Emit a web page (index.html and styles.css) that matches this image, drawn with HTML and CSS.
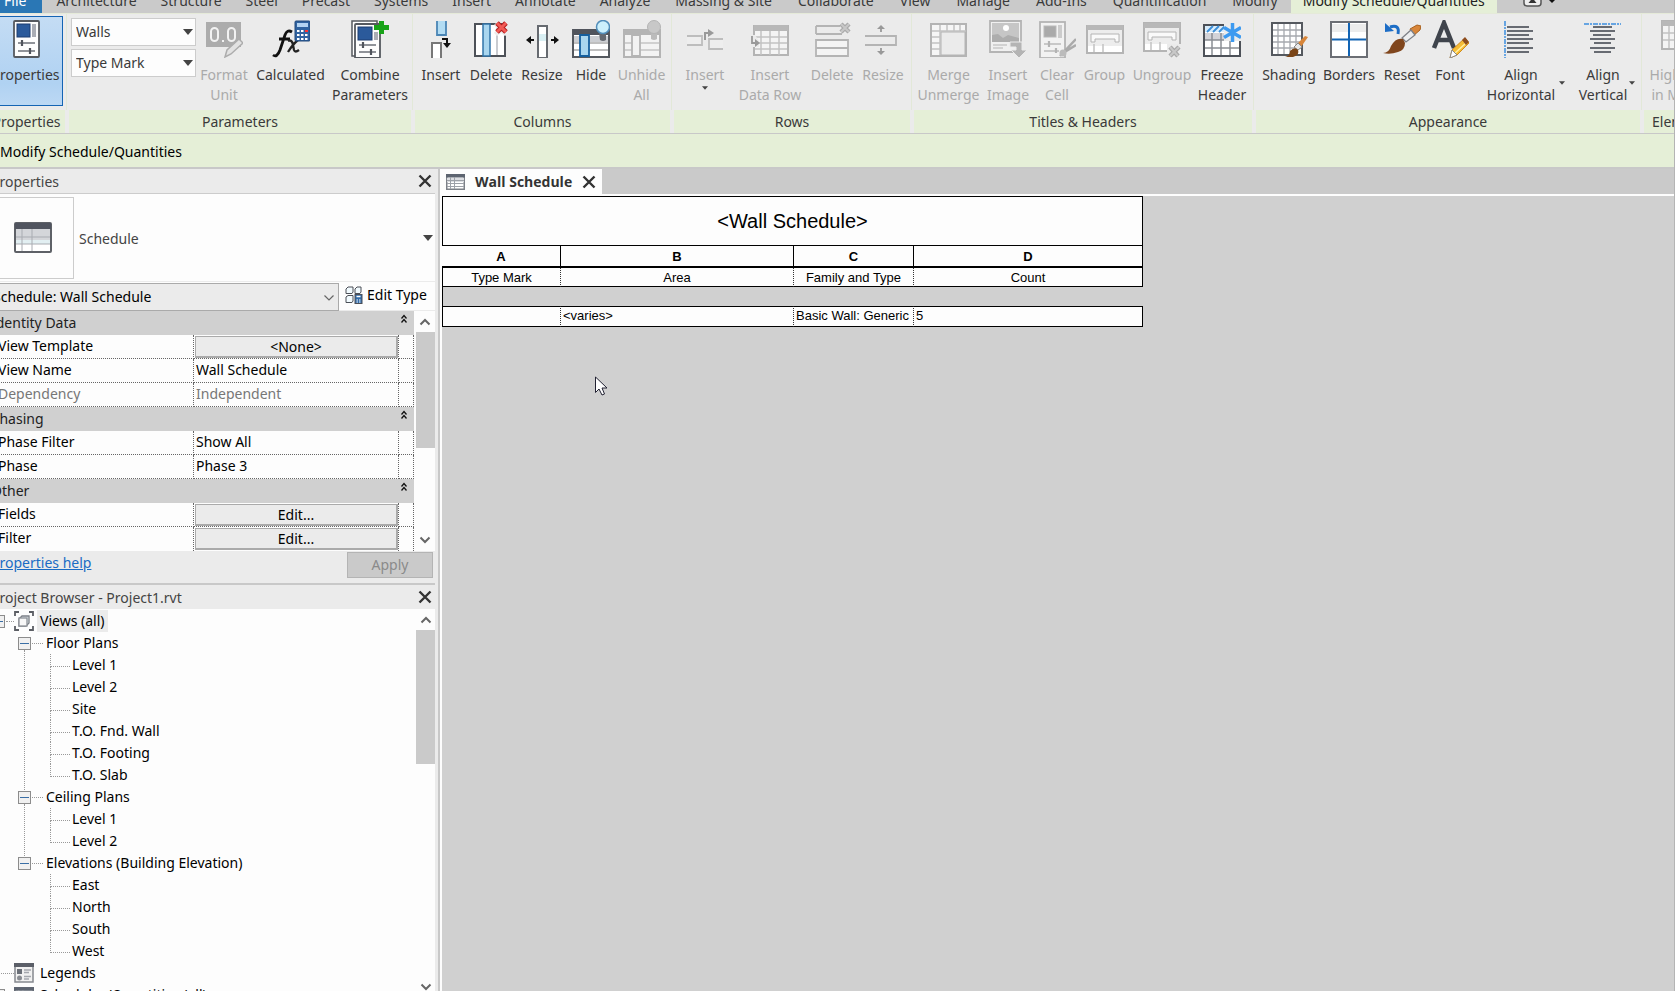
FILE: index.html
```
<!DOCTYPE html>
<html lang="en">
<head>
<meta charset="utf-8">
<title>Wall Schedule</title>
<link rel="stylesheet" href="styles.css">
</head>
<body>
<svg class="defs" aria-hidden="true">
  <symbol id="caret" viewBox="0 0 10 6"><path d="M0 0h10L5 6z" fill="#444"/></symbol>
  <symbol id="close" viewBox="0 0 14 14"><path d="M1.500 1.500l11 11M12.500 1.500l-11 11" stroke="#333" stroke-width="2.400" fill="none"/></symbol>
  <symbol id="up" viewBox="0 0 12 8"><path d="M1.500 6.500L6 2l4.500 4.500" stroke="#666" stroke-width="2" fill="none"/></symbol>
  <symbol id="down" viewBox="0 0 12 8"><path d="M1.500 1.500L6 6l4.500-4.500" stroke="#666" stroke-width="2" fill="none"/></symbol>
  <symbol id="fold" viewBox="0 0 8 10"><path d="M1.500 4.500L4 1.500l2.500 3M1.500 8.500L4 5.500l2.500 3" stroke="#111" stroke-width="1.300" fill="none"/></symbol>
  <symbol id="sheet" viewBox="0 0 38 32"><rect x="1" y="1" width="36" height="29" rx="1" fill="#fff" stroke="#5e6167" stroke-width="2"/><rect x="2" y="7" width="34" height="11" fill="#d4d6da"/><path d="M2 18h34v4H2z" fill="#e2eff2"/><path d="M1 1h36v6H1z" fill="#50545f"/><path d="M8 7v22M18 7v22M2 15h34M2 22h34" stroke="#a9acb2" fill="none"/></symbol>
  <symbol id="sheet-s" viewBox="0 0 19 16"><rect x=".75" y=".75" width="17.500" height="14.500" fill="#fff" stroke="#7c8087" stroke-width="1.500"/><path d="M1 4h17v4H1z" fill="#dcdee2"/><path d="M0 0h19v3.500H0z" fill="#5d6470"/><path d="M4.500 3v12M8.500 3v12M1 6.500h17M1 9.500h17M1 12.500h17" stroke="#9da1a8" fill="none"/></symbol>
</svg>

<nav class="tabs">
  <a class="tab file" href="#">File</a>
  <a class="tab" href="#">Architecture</a>
  <a class="tab" href="#">Structure</a>
  <a class="tab" href="#">Steel</a>
  <a class="tab" href="#">Precast</a>
  <a class="tab" href="#">Systems</a>
  <a class="tab" href="#">Insert</a>
  <a class="tab" href="#">Annotate</a>
  <a class="tab" href="#">Analyze</a>
  <a class="tab" href="#">Massing &amp; Site</a>
  <a class="tab" href="#">Collaborate</a>
  <a class="tab" href="#">View</a>
  <a class="tab" href="#">Manage</a>
  <a class="tab" href="#">Add-Ins</a>
  <a class="tab" href="#">Quantification</a>
  <a class="tab" href="#">Modify</a>
  <a class="tab active" href="#">Modify Schedule/Quantities</a>
  <button class="minimize" aria-label="Minimize ribbon"><svg width="32" height="14" viewBox="0 0 32 14"><rect x="1" y="-10" width="17" height="17" rx="3" fill="#eee" stroke="#555" stroke-width="1.500"/><path d="M5.500 4L9.500 -1l4 5z" fill="#333"/><path d="M25 0h8l-4 4z" fill="#111"/></svg></button>
</nav>

<header class="ribbon">
  <section class="panel p-props">
    <div class="tools">
      <button class="tool pressed"><svg class="ico" viewBox="0 0 38 38"><rect x="7" y="1" width="25" height="36" rx="1" fill="#fdfdfd" stroke="#55595f" stroke-width="1.800"/><rect x="10" y="4" width="13" height="13" fill="#2b5a9b" stroke="#1d3d70"/><path d="M25 4h4v13h-4z" fill="#aaadb5"/><path d="M11 23h17M11 31h17" stroke="#6c7078" stroke-width="1.600"/><path d="M15 20v6M23 28v6" stroke="#50545c" stroke-width="2.200"/></svg><span>Properties</span></button>
    </div>
    <h2>Properties</h2>
  </section>

  <section class="panel p-params">
    <div class="tools">
      <div class="pickers">
        <div class="pick"><select aria-label="Category"><option>Walls</option></select><svg class="caret" aria-hidden="true"><use href="#caret"/></svg></div>
        <div class="pick"><select aria-label="Parameter"><option>Type Mark</option></select><svg class="caret" aria-hidden="true"><use href="#caret"/></svg></div>
      </div>
      <button class="tool" disabled><svg class="ico" viewBox="0 0 38 38"><path d="M1 2h35v25H1z" fill="#acacac"/><g fill="none" stroke="#f2f2f2" stroke-width="2"><rect x="6" y="8" width="7" height="13" rx="3.500"/><rect x="23" y="8" width="7" height="13" rx="3.500"/><path d="M17 21h2"/></g><path d="M20 37l2-7 12-11 4 4-12 11z" fill="#e2e2e2" stroke="#acacac" stroke-width="1.500"/></svg><span>Format<br>Unit</span></button>
      <button class="tool"><svg class="ico" viewBox="0 0 38 38"><path d="M1 35q4 3 7-5l5-15q2-6 7-3M7 19h11" stroke="#111" stroke-width="2.800" fill="none"/><path d="M16 21q4-2 5 4l1 5q1 3 5 0M26 20q-5 4-10 12" stroke="#222" stroke-width="2.300" fill="none"/><rect x="23" y="1" width="15" height="20" rx="1" fill="#2f62a0" stroke="#23497a"/><path d="M25 3h11v4H25z" fill="#b3d3f2"/><path d="M25 10h2.500v2H25zM29 10h2.500v2H29zM25 14h2.500v2H25zM29 14h2.500v2H29zM33 14h2.500v2H33zM25 18h2.500v2H25zM29 18h2.500v2H29zM33 18h2.500v2H33z" fill="#fff"/><path d="M33 10h3v2h-3z" fill="#f33"/></svg><span>Calculated</span></button>
      <button class="tool"><svg class="ico" viewBox="0 0 38 38"><path d="M4 36H1V1h25v3" fill="#fff" stroke="#55595f" stroke-width="1.500"/><rect x="4" y="4" width="25" height="34" rx="1" fill="#fdfdfd" stroke="#55595f" stroke-width="1.800"/><rect x="7" y="7" width="14" height="13" fill="#2b5a9b" stroke="#1d3d70"/><path d="M23 12h4v8h-4z" fill="#aaadb5"/><path d="M8 25h17M8 32h17" stroke="#6c7078" stroke-width="1.600"/><path d="M12 22v6M20 29v6" stroke="#50545c" stroke-width="2.200"/><path d="M28 1h5v4h5v5h-5v4h-5v-4h-5V5h5z" fill="#18a318"/></svg><span>Combine<br>Parameters</span></button>
    </div>
    <h2>Parameters</h2>
  </section>

  <section class="panel p-cols">
    <div class="tools">
      <button class="tool"><svg class="ico" viewBox="0 0 38 38"><path d="M15 1v14h9V1" fill="#b2dcf3" stroke="#4a85b5" stroke-width="1.800"/><path d="M10 38V23h9v15" fill="#fff" stroke="#777" stroke-width="2"/><path d="M20 19h5v5" fill="none" stroke="#111" stroke-width="2"/><path d="M21 23h8l-4 5z" fill="#111"/></svg><span>Insert</span></button>
      <button class="tool"><svg class="ico" viewBox="0 0 38 38"><rect x="3" y="4" width="30" height="32" fill="#fff" stroke="#4d5158" stroke-width="2"/><path d="M25 5v30" stroke="#b7bac0" stroke-width="1.500"/><path d="M11 4h7v32h-7z" fill="#a9d6ef" stroke="#3174a9" stroke-width="1.500"/><path d="M25 2l4 3 4-3 4 3-3 4 3 4-4 3-4-3-4 3-3-3 3-4-3-4z" fill="#ececec"/><path d="M25 3l9 9M34 3l-9 9" stroke="#b41b1b" stroke-width="5"/><path d="M25 3l9 9M34 3l-9 9" stroke="#f15a55" stroke-width="3"/></svg><span>Delete</span></button>
      <button class="tool"><svg class="ico" viewBox="0 0 38 38"><rect x="15" y="6" width="9" height="32" fill="#fff" stroke="#666a70" stroke-width="2"/><path d="M16 14h7v7h-7z" fill="#d9eff3"/><path d="M5 20h6M28 20h6" stroke="#111" stroke-width="1.800"/><path d="M8 16v8l-5-4zM31 16v8l5-4z" fill="#111"/></svg><span>Resize</span></button>
      <button class="tool"><svg class="ico" viewBox="0 0 38 38"><rect x="1" y="10" width="36" height="27" fill="#fff" stroke="#55595f" stroke-width="2"/><path d="M1 9h36v6H1z" fill="#50545c"/><path d="M2 16h34v6H2z" fill="#ccced2"/><path d="M2 23h34M2 30h34" stroke="#aaa" stroke-width="1.500"/><path d="M8 15h9v21H8z" fill="#a9d6ef" stroke="#155f9e" stroke-width="1.800"/><path d="M27 13h7v7q-3 2-6 0z" fill="#656970"/><circle cx="31" cy="7" r="6.500" fill="#ccf0fc" stroke="#528eba" stroke-width="1.500"/></svg><span>Hide</span></button>
      <button class="tool" disabled><svg class="ico" viewBox="0 0 38 38"><rect x="1" y="10" width="36" height="27" fill="#f3f3f3" stroke="#b4b4b4" stroke-width="2"/><path d="M1 9h36v6H1z" fill="#b4b4b4"/><path d="M2 23h34M2 30h34" stroke="#c5c5c5" stroke-width="1.500"/><path d="M9 15h8v21H9z" fill="#f2f2f2" stroke="#b4b4b4" stroke-width="1.800"/><path d="M28 13h6v6q-3 2-6 0z" fill="#bbb"/><circle cx="31" cy="7" r="6.500" fill="#c8c8c8" stroke="#b4b4b4"/></svg><span>Unhide<br>All</span></button>
    </div>
    <h2>Columns</h2>
  </section>

  <section class="panel p-rows">
    <div class="tools">
      <button class="tool" disabled><svg class="ico" viewBox="0 0 38 38"><path d="M1 16h15v9H1M37 19H23v10h14" fill="#eee" stroke="#bdbdbd" stroke-width="1.800"/><path d="M19 20v-7h4" fill="none" stroke="#999" stroke-width="2"/><path d="M22 9v8l6-4z" fill="#999"/></svg><span>Insert</span><svg class="caret-s" aria-hidden="true"><use href="#caret"/></svg></button>
      <button class="tool" disabled><svg class="ico" viewBox="0 0 38 38"><rect x="3" y="6" width="34" height="29" fill="#f4f4f4" stroke="#b4b4b4" stroke-width="2"/><path d="M3 5h34v6H3z" fill="#b8b8b8"/><path d="M10 11v24M19 11v24M28 11v24M4 17h32M4 23h32M4 29h32" stroke="#c2c2c2" stroke-width="1.500"/><path d="M0 15h4l4 6v6H0z" fill="#ebebeb"/><path d="M1 16v7h5" fill="none" stroke="#999" stroke-width="1.800"/><path d="M4 19v8l5-4z" fill="#999"/></svg><span>Insert<br>Data Row</span></button>
      <button class="tool" disabled><svg class="ico" viewBox="0 0 38 38"><path d="M3 6h24M3 14h26M3 6v8M3 20h32v16H3zM3 28h32" fill="#f4f4f4" stroke="#b4b4b4" stroke-width="1.800"/><path d="M28 4l8 8M36 4l-8 8" stroke="#a9a9a9" stroke-width="4.500"/><path d="M28 4l8 8M36 4l-8 8" stroke="#c8c8c8" stroke-width="2"/></svg><span>Delete</span></button>
      <button class="tool" disabled><svg class="ico" viewBox="0 0 38 38"><path d="M1 16h31v9H1" fill="none" stroke="#b4b4b4" stroke-width="1.800"/><path d="M17 12V8M17 28v5" stroke="#999" stroke-width="1.800"/><path d="M13 9h8l-4-4zM13 31h8l-4 4z" fill="#999"/></svg><span>Resize</span></button>
    </div>
    <h2>Rows</h2>
  </section>

  <section class="panel p-titles">
    <div class="tools">
      <button class="tool" disabled><svg class="ico" viewBox="0 0 38 38"><rect x="1" y="4" width="35" height="32" fill="#f6f6f6" stroke="#b4b4b4" stroke-width="2"/><path d="M10 5v30M2 11h34M17 5v6M24 5v6M30 5v6M2 17h8M2 23h8M2 29h8" stroke="#c2c2c2" stroke-width="1.500"/><path d="M11 12h24v23H11z" fill="#ebebeb" stroke="#b4b4b4"/></svg><span>Merge<br>Unmerge</span></button>
      <button class="tool" disabled><svg class="ico" viewBox="0 0 38 38"><path d="M1 1h31v31H1z" fill="#f0f0f0" stroke="#b4b4b4" stroke-width="1.800"/><path d="M3 3h27v18H3z" fill="#c6c6c6"/><circle cx="17" cy="8" r="3" fill="#fff"/><path d="M3 15l6-1 5 4 5-3 11 3v4H3z" fill="#adadad"/><path d="M4 25h14M4 28h10" stroke="#c8c8c8" stroke-width="1.500"/><path d="M21 22h12v8h5l-8 8-8-8h5v-3h-6z" fill="#b4b4b4" stroke="#ebebeb"/></svg><span>Insert<br>Image</span></button>
      <button class="tool" disabled><svg class="ico" viewBox="0 0 38 38"><rect x="2" y="2" width="25" height="36" fill="#f2f2f2" stroke="#b4b4b4" stroke-width="1.800"/><rect x="6" y="6" width="12" height="11" fill="#aaa" stroke="#b9b9b9"/><path d="M20 5h4v13h-4z" fill="#ccc"/><path d="M6 24h17M6 31h15" stroke="#bbb" stroke-width="1.600"/><path d="M11 21v6M18 28v5" stroke="#b4b4b4" stroke-width="2.200"/><path d="M22 36l16-17M25 33l13-8" stroke="#aaa" stroke-width="2.500"/><circle cx="25" cy="33" r="3.500" fill="#bbb"/></svg><span>Clear<br>Cell</span></button>
      <button class="tool" disabled><svg class="ico" viewBox="0 0 38 38"><rect x="1" y="6" width="36" height="27" fill="#ededed" stroke="#b4b4b4" stroke-width="2"/><path d="M1 5h36v5H1z" fill="#b8b8b8"/><path d="M2 26h34v6H2z" fill="#fff"/><path d="M8 24v8M17 24v8" stroke="#c2c2c2" stroke-width="1.500"/><path d="M5 22V14h28v8h-4v-3H9v3z" fill="#fafafa" stroke="#b4b4b4"/></svg><span>Group</span></button>
      <button class="tool" disabled><svg class="ico" viewBox="0 0 38 38"><rect x="1" y="3" width="36" height="28" fill="#ededed" stroke="#b4b4b4" stroke-width="2"/><path d="M1 3h36v5H1z" fill="#b8b8b8"/><path d="M2 24h34v6H2z" fill="#fff"/><path d="M8 22v8M17 22v8" stroke="#c2c2c2" stroke-width="1.500"/><path d="M5 20V12h28v8h-4v-3H9v3z" fill="#fafafa" stroke="#b4b4b4"/><path d="M24 24h14v14H24z" fill="#ebebeb"/><path d="M27 27l8 9M36 27l-9 9" stroke="#a9a9a9" stroke-width="4.500"/><path d="M27 27l8 9M36 27l-9 9" stroke="#c8c8c8" stroke-width="2"/></svg><span>Ungroup</span></button>
      <button class="tool"><svg class="ico" viewBox="0 0 38 38"><rect x="1" y="5" width="36" height="31" fill="#fff" stroke="#4d5158" stroke-width="2"/><path d="M2 6h20v6H2z" fill="#d8ecfb"/><path d="M4 12l6-6M10 12l6-6M16 12l6-6" stroke="#3c8fd8" stroke-width="1.800"/><path d="M2 13h34v7H2z" fill="#d3d3d8"/><path d="M9 13v22M18 13v22M27 13v22M2 20h34M2 28h34" stroke="#8b8e94" stroke-width="1.500"/><path d="M21 3h17v18H21z" fill="#ececec"/><path d="M29.500 3v19M21 7.500l17 10M21 17.500l17-10" stroke="#3d9af0" stroke-width="3.500"/></svg><span>Freeze<br>Header</span></button>
    </div>
    <h2>Titles &amp; Headers</h2>
  </section>

  <section class="panel p-look">
    <div class="tools">
      <button class="tool"><svg class="ico" viewBox="0 0 38 38"><rect x="2" y="3" width="30" height="32" fill="#fff" stroke="#55595f" stroke-width="2"/><path d="M8 4v30M14 4v30M20 4v30M26 4v30M3 10h28M3 16h28M3 22h28M3 28h28" stroke="#a6a9ae" stroke-width="1.300"/><path d="M27 24l8-8 3 1-7 10z" fill="#d8863a"/><path d="M24 27l4-4 4 4-4 3z" fill="#e8e8e8" stroke="#888"/><path d="M15 37q5-1 5-6 5-5 8-1 2 5-5 7z" fill="#7a4517"/></svg><span>Shading</span></button>
      <button class="tool"><svg class="ico" viewBox="0 0 38 38"><rect x="1" y="2" width="36" height="35" fill="#fff" stroke="#6b6e74" stroke-width="2"/><path d="M2 4h34v8H2z" fill="#ececec"/><path d="M19 3v33M2 19.500h34" stroke="#1264b4" stroke-width="2"/></svg><span>Borders</span></button>
      <button class="tool"><svg class="ico" viewBox="0 0 38 38"><path d="M15 14q2-10-8-7" fill="none" stroke="#1c6dc6" stroke-width="3"/><path d="M2 3v9l9-1z" fill="#1c6dc6"/><path d="M27 9l7-4 4 1-1 4-7 6z" fill="#d8863a" stroke="#a8601e"/><path d="M19 18l9-8 4 5-9 7z" fill="#eceef0" stroke="#7d8087" stroke-width="1.300"/><path d="M0 33q6 0 8-7 5-9 12-7l2 4q0 7-7 9-8 3-15 1z" fill="#80461d"/></svg><span>Reset</span></button>
      <button class="tool"><svg class="ico" viewBox="0 0 38 38"><path d="M3 28L13 3l10 25M7 20h12" fill="none" stroke="#3f444c" stroke-width="4.500"/><path d="M19 38l2-8 13-12 4 5-12 12z" fill="#f6bd35" stroke="#d08a1c"/><path d="M23 34l12-11" stroke="#fff0a8" stroke-width="1.500"/><path d="M19 38l2-8 5 5z" fill="#fff" stroke="#888"/><path d="M31 20l3-3 4 5-3 3z" fill="#8d4d1e"/></svg><span>Font</span></button>
      <button class="tool"><svg class="ico" viewBox="0 0 38 38"><path d="M3 1v37" stroke="#3c8fe0" stroke-width="1.500" stroke-dasharray="5 1 2 1"/><path d="M5 7h22M5 11h26M5 15h22M5 19h26M5 23h22M5 28h26M5 32h22" stroke="#676b72" stroke-width="2"/></svg><span>Align<br>Horizontal</span><svg class="caret-r" aria-hidden="true"><use href="#caret"/></svg></button>
      <button class="tool"><svg class="ico" viewBox="0 0 38 38"><path d="M0 4h37" stroke="#3c8fe0" stroke-width="1.500" stroke-dasharray="5 1 2 1"/><path d="M9 7h19M6 11h25M9 15h18M6 19h25M10 23h17M6 28h25M10 32h17" stroke="#676b72" stroke-width="2"/></svg><span>Align<br>Vertical</span><svg class="caret-r" aria-hidden="true"><use href="#caret"/></svg></button>
    </div>
    <h2>Appearance</h2>
  </section>

  <section class="panel p-elem">
    <div class="tools">
      <button class="tool" disabled><svg class="ico" viewBox="0 0 38 38"><rect x="1" y="1" width="34" height="28" fill="#f4f4f4" stroke="#b4b4b4" stroke-width="2"/><path d="M1 1h34v5H1z" fill="#b8b8b8"/><path d="M8 6v22M17 6v22M2 13h32M2 20h32" stroke="#c2c2c2" stroke-width="1.500"/></svg><span>Highlight<br>in Model</span></button>
    </div>
    <h2>Element</h2>
  </section>
</header>
<div class="context">Modify Schedule/Quantities</div>

<main class="work">
  <aside class="side">
    <section class="props">
      <div class="head"><h3>Properties</h3><button class="x" aria-label="Close Properties"><svg width="14" height="14"><use href="#close"/></svg></button></div>
      <div class="type">
        <div class="thumb"><svg width="38" height="32"><use href="#sheet"/></svg></div>
        <span>Schedule</span>
        <button class="more" aria-label="Change type"><svg class="arrow"><use href="#caret"/></svg></button>
      </div>
      <div class="instance">
        <div class="pick wide"><select aria-label="Instance"><option>Schedule: Wall Schedule</option></select><svg class="chev" viewBox="0 0 12 8" aria-hidden="true"><path d="M1.500 1.500L6 6l4.500-4.500" stroke="#666" stroke-width="1.200" fill="none"/></svg></div>
        <button class="edit-type"><svg width="18" height="18" viewBox="0 0 18 18"><g fill="#f2fbff" stroke="#4b4f57"><path d="M1 3l2-2h5v5l-1 1.500H1zM10 3l2-2h4v5l-1 1.500h-5zM1 11l2-1.500h5V15l-1 1.500H1z"/><rect x="10" y="8.500" width="7" height="9" fill="#2f6aa8"/></g><path d="M11.500 10.500h4" stroke="#fff" stroke-width="1.500"/><path d="M11.500 14h1.500M14 14h1.500M11.500 16h1.500M14 16h1.500" stroke="#fff"/></svg>Edit Type</button>
      </div>
      <div class="scroller">
        <table class="grid">
          <colgroup><col class="c-name"><col class="c-val"><col class="c-btn"></colgroup>
          <tbody>
            <tr><th class="group" colspan="3" scope="rowgroup"><div>Identity Data<svg width="8" height="10"><use href="#fold"/></svg></div></th></tr>
            <tr><th scope="row">View Template</th><td class="has-btn"><button>&lt;None&gt;</button></td><td></td></tr>
            <tr><th scope="row">View Name</th><td>Wall Schedule</td><td></td></tr>
            <tr class="off"><th scope="row">Dependency</th><td>Independent</td><td></td></tr>
          </tbody>
          <tbody>
            <tr><th class="group" colspan="3" scope="rowgroup"><div>Phasing<svg width="8" height="10"><use href="#fold"/></svg></div></th></tr>
            <tr><th scope="row">Phase Filter</th><td>Show All</td><td></td></tr>
            <tr><th scope="row">Phase</th><td>Phase 3</td><td></td></tr>
          </tbody>
          <tbody>
            <tr><th class="group" colspan="3" scope="rowgroup"><div>Other<svg width="8" height="10"><use href="#fold"/></svg></div></th></tr>
            <tr><th scope="row">Fields</th><td class="has-btn"><button>Edit...</button></td><td></td></tr>
            <tr><th scope="row">Filter</th><td class="has-btn"><button>Edit...</button></td><td></td></tr>
          </tbody>
        </table>
        <div class="bar"><svg width="12" height="8"><use href="#up"/></svg><div class="knob"></div><svg class="end" width="12" height="8"><use href="#down"/></svg></div>
      </div>
      <div class="foot"><a href="#">Properties help</a><button disabled>Apply</button></div>
    </section>

    <section class="browser">
      <div class="head"><h3>Project Browser - Project1.rvt</h3><button class="x" aria-label="Close Project Browser"><svg width="14" height="14"><use href="#close"/></svg></button></div>
      <div class="scroller">
        <ul class="tree">
          <li class="root"><div class="row"><i class="box"></i><i class="dots"></i><svg width="20" height="20" viewBox="0 0 20 20"><path d="M1 5V1h4M15 1h4v4M19 15v4h-4M5 19H1v-4" fill="none" stroke="#5b5e64" stroke-width="1.800"/><path d="M5 8l3-3h7v7l-3 3H5z" fill="#e6edf0" stroke="#7b7f86" stroke-width="1.300"/><rect x="5" y="7" width="8" height="8" fill="#f8f8f8" stroke="#8b8f96" stroke-width="1.300"/></svg><span class="sel">Views (all)</span></div>
            <ul class="folders">
              <li><div class="row"><i class="box"></i><i class="dots"></i><span>Floor Plans</span></div>
                <ul class="leaves"><li>Level 1</li><li>Level 2</li><li>Site</li><li>T.O. Fnd. Wall</li><li>T.O. Footing</li><li>T.O. Slab</li></ul></li>
              <li><div class="row"><i class="box"></i><i class="dots"></i><span>Ceiling Plans</span></div>
                <ul class="leaves"><li>Level 1</li><li>Level 2</li></ul></li>
              <li><div class="row"><i class="box"></i><i class="dots"></i><span>Elevations (Building Elevation)</span></div>
                <ul class="leaves"><li>East</li><li>North</li><li>South</li><li>West</li></ul></li>
            </ul>
          </li>
          <li class="root"><div class="row"><i class="dots long"></i><svg width="20" height="20" viewBox="0 0 20 20"><rect x="1" y="1" width="18" height="18" fill="#f1f1f1" stroke="#85888e" stroke-width="1.500"/><path d="M0 0h20v4H0z" fill="#5b5f68"/><path d="M3 6h5v5H3z" fill="#6b7078"/><circle cx="5.500" cy="15" r="2.500" fill="#8a8d93"/><path d="M10 7h7M10 9.500h5M10 13.500h7M10 16h5" stroke="#a5a8ae" stroke-width="1.500"/></svg><span>Legends</span></div></li>
          <li class="root"><div class="row"><i class="box"></i><i class="dots"></i><svg width="20" height="17"><use href="#sheet-s"/></svg><span>Schedules/Quantities (all)</span></div></li>
        </ul>
        <div class="bar"><svg width="12" height="8"><use href="#up"/></svg><div class="knob tall"></div><svg class="end" width="12" height="8"><use href="#down"/></svg></div>
      </div>
    </section>
  </aside>

  <section class="doc">
    <div class="doc-tabs"><div class="doc-tab"><svg width="19" height="16"><use href="#sheet-s"/></svg><span>Wall Schedule</span><button class="x" aria-label="Close view"><svg width="14" height="14"><use href="#close"/></svg></button></div></div>
    <div class="canvas">
      <table class="schedule">
        <colgroup><col class="ca"><col class="cb"><col class="cc"><col class="cd"></colgroup>
        <thead>
          <tr class="title"><th colspan="4">&lt;Wall Schedule&gt;</th></tr>
          <tr class="letters"><th>A</th><th>B</th><th>C</th><th>D</th></tr>
          <tr class="names"><th>Type Mark</th><th>Area</th><th>Family and Type</th><th>Count</th></tr>
        </thead>
        <tbody>
          <tr class="blank"><td colspan="4"></td></tr>
          <tr class="data"><td></td><td>&lt;varies&gt;</td><td>Basic Wall: Generic</td><td>5</td></tr>
        </tbody>
      </table>
      <svg class="pointer" width="13" height="20" viewBox="0 0 13 20" aria-hidden="true"><path d="M.5 1v15.500L4 13l3 6 2.500-1-2.500-6h5z" fill="#fff" stroke="#223"/></svg>
    </div>
  </section>
</main>
</body>
</html>
```
FILE: styles.css
```
* { box-sizing: border-box; }
html, body { height: 100%; }
body {
  margin: 0;
  display: flex;
  flex-direction: column;
  overflow: hidden;
  background: #ebebeb;
  color: #000;
  font: 14px/20px "Noto Sans", "Open Sans", sans-serif;
}
button, select {
  font: inherit;
  color: inherit;
  border: 0;
  border-radius: 0;
  padding: 0;
  margin: 0;
  background: none;
  appearance: none;
}
h2, h3, ul { margin: 0; padding: 0; font-size: 14px; font-weight: 400; list-style: none; }
svg { display: block; flex: none; }
.defs { position: absolute; width: 0; height: 0; }

/* Window edge */
body::after {
  content: "";
  position: absolute;
  inset: 0 0 0 auto;
  border-right: 1px solid #b4b4b4;
}

/* Ribbon tabs */
.tabs {
  flex: none;
  display: flex;
  align-items: flex-end;
  height: 13px;
  overflow: hidden;
  background: #cacaca;
}
.tab {
  flex: none;
  height: 22px;
  padding: 0 12px;
  color: #3a3a3a;
  text-decoration: none;
  white-space: nowrap;
}
.tab:nth-child(n+10) { padding: 0 13px; }
.tab.file { padding: 0 16px 0 4px; margin-right: 2px; background: #2a77b5; color: #fff; }
.tab.active { padding: 0 12px; background: #e5efd7; color: #222; }
.minimize { margin-left: 26px; }

/* Ribbon */
.ribbon {
  flex: none;
  display: flex;
  gap: 4px;
  margin-left: -12px;
  color: #3a3a3a;
  border-top: 1px solid #e5ead9;
}
.panel { flex: none; position: relative; display: flex; flex-direction: column; }
.panel + .panel::before {
  content: "";
  position: absolute;
  left: -3px;
  top: 0;
  height: 96px;
  border-left: 1px solid #e2e8d8;
}
.tools { display: grid; height: 96px; padding: 2px 2px 0; }
.panel h2 { height: 23px; line-height: 24px; text-align: center; background: #e5efd7; }
.tool {
  position: relative;
  display: flex;
  flex-direction: column;
  align-items: center;
  height: 90px;
  padding-top: 4px;
  white-space: nowrap;
}
.tool span { margin-top: 7px; }
.tool:disabled { color: #aaa; }
.ico { width: 38px; height: 38px; }
.pressed {
  border: 1px solid #1464b4;
  padding-top: 3px;
  background: linear-gradient(#c4dcf4, #b0d2f2 75%, #bcd8f4);
}
.caret-s { width: 6px; height: 4px; margin-top: 1px; }
.caret-r { position: absolute; right: 3px; top: 65px; width: 6px; height: 4px; }
.p-props .tools { grid-template-columns: 75px; padding-left: 0; }
.p-params .tools { grid-template-columns: 127px 52px 81px 78px; }
.p-cols .tools { grid-template-columns: 48px 52px 50px 48px 53px; }
.p-rows .tools { grid-template-columns: 58px 72px 52px 50px; }
.p-titles .tools { grid-template-columns: 65px 54px 44px 51px 64px 56px; }
.p-look .tools { grid-template-columns: 62px 58px 48px 48px 94px 70px; }
.p-elem .tools { grid-template-columns: 68px; }
.p-elem h2 { padding-left: 8px; text-align: left; }

.pickers { display: flex; flex-direction: column; gap: 3px; padding-top: 2px; width: 125px; }
.pick { position: relative; }
.pick select {
  display: block;
  width: 100%;
  height: 28px;
  padding: 0 4px;
  border: 1px solid #ccc;
  background: #fdfdfd;
}
.caret { position: absolute; right: 3px; top: 11px; width: 10px; height: 6px; }

.context {
  flex: none;
  height: 36px;
  line-height: 35px;
  background: #e5efd7;
  border-top: 1px solid #c8c8c8;
  border-bottom: 2px solid #c8c8c8;
}

/* Left palettes */
.work { flex: 1; min-height: 0; display: flex; }
.side {
  flex: none;
  width: 452px;
  margin-left: -12px;
  display: flex;
  flex-direction: column;
  border-right: 2px solid #c8c8c8;
  padding-right: 3px;
}
.head { display: flex; justify-content: space-between; align-items: center; height: 24px; padding: 0 3px; color: #444; }
.head h3 { line-height: 24px; padding-top: 1px; }
.x { width: 14px; height: 14px; }
.type {
  display: flex;
  align-items: center;
  height: 88px;
  background: #fdfdfd;
  border-top: 1px solid #ccc;
  color: #444;
}
.thumb { display: flex; align-items: center; justify-content: flex-end; width: 86px; height: 82px; padding-right: 21px; border: 1px solid #ccc; }
.type span { margin-left: 5px; padding-top: 2px; }
.more { margin-left: auto; padding: 4px 2px; }
.arrow { width: 10px; height: 6px; }
.instance { display: flex; height: 30px; padding: 1px 0; background: #fdfdfd; border-top: 1px solid #ebebeb; border-bottom: 1px solid #ebebeb; }
.pick.wide { width: 351px; }
.pick.wide select { border-color: #aaa; background: #ebebeb; }
.chev { position: absolute; right: 4px; top: 11px; width: 12px; height: 8px; }
.edit-type { display: flex; align-items: center; gap: 4px; height: 24px; margin-left: 6px; }

.scroller { display: flex; background: #fdfdfd; }
.grid { width: 426px; table-layout: fixed; border-collapse: separate; border-spacing: 0; }
.c-name { width: 206px; }
.c-val { width: 205px; }
.c-btn { width: 15px; }
.grid th, .grid td {
  height: 24px;
  padding: 0 0 2px 2px;
  line-height: 20px;
  font-weight: 400;
  text-align: left;
  border-right: 1px dotted #666;
  border-bottom: 1px dotted #666;
}
.grid th { padding-left: 10px; }
.grid th.group { padding: 0 6px 0 3px; border: 0; background: #d0d0d0; color: #222; }
.group div { display: flex; justify-content: space-between; height: 24px; line-height: 24px; }
.group svg { margin-top: 3px; }
.off th, .off td { color: #777; }
.grid tbody:last-child tr:last-child > * { border-bottom: 0; }
.grid .has-btn { padding: 0 0 0 1px; }
.has-btn button { display: block; width: 203px; height: 22px; background: #ebebeb; border: 1px solid #aaa; border-right-width: 2px; border-bottom-width: 2px; }
.bar { display: flex; flex-direction: column; align-items: center; gap: 6px; margin-left: auto; width: 20px; padding: 7px 0; }
.knob { width: 19px; height: 116px; background: #cacaca; }
.knob.tall { height: 134px; }
.bar .end { margin-top: auto; }
.foot { display: flex; justify-content: space-between; height: 32px; padding: 1px 2px 0 3px; }
.foot a { color: #1a6cc4; line-height: 22px; }
.foot button { width: 86px; height: 26px; background: #cacaca; border: 1px solid #b4b4b4; color: #8a8a8a; }

.browser { flex: 1; min-height: 0; display: flex; flex-direction: column; border-top: 2px solid #c8c8c8; }
.browser .head { flex: none; margin-right: -3px; padding-right: 6px; }
.browser .scroller { flex: 1; min-height: 0; overflow: hidden; }
.browser .bar { width: 19px; padding: 7px 0 0; }
.tree { padding: 1px 0 0 4px; white-space: nowrap; }
.row { display: flex; align-items: center; height: 22px; }
.root > .row > span { margin-left: 3px; padding: 0 3px; line-height: 22px; }
.root > .row > .sel { background: #ebebeb; padding-right: 4px; }
.box {
  width: 13px;
  height: 13px;
  border: 1px solid #8c8c8c;
  background: linear-gradient(#3a6ea5, #3a6ea5) center / 9px 1px no-repeat #f0f0f0;
}
.dots { width: 8px; margin: 0 0 0 1px; border-top: 1px dotted #999; }
.dots.long { width: 21px; }
.folders { padding-left: 26px; }
.folders > li { position: relative; }
.folders > li:not(:last-child)::after {
  content: "";
  position: absolute;
  left: 6px;
  top: 18px;
  bottom: -4px;
  border-left: 1px dotted #999;
}
.folders .dots { width: 11px; }
.folders .row span { margin-left: 3px; }
.leaves { padding-left: 32px; }
.leaves li { position: relative; height: 22px; line-height: 22px; padding-left: 22px; }
.leaves li::before {
  content: "";
  position: absolute;
  left: 0;
  top: 0;
  width: 19px;
  height: 12px;
  border-left: 1px dotted #999;
  border-bottom: 1px dotted #999;
}
.leaves li:not(:last-child)::after {
  content: "";
  position: absolute;
  left: 0;
  top: 12px;
  height: 10px;
  border-left: 1px dotted #999;
}

/* Document area */
.doc { flex: 1; min-width: 0; display: flex; flex-direction: column; }
.doc-tabs { display: flex; height: 25px; background: #cacaca; }
.doc-tab { display: flex; align-items: center; padding: 0 6px; background: #fdfdfd; font-weight: 700; color: #333; }
.doc-tab span { margin: 0 10px; font-family: "Open Sans", "Noto Sans", sans-serif; }
.canvas { position: relative; flex: 1; background: #d0d0d0; border: solid #fdfdfd; border-width: 2px 0 0 2px; }
.schedule {
  width: 701px;
  table-layout: fixed;
  border-collapse: separate;
  border-spacing: 0;
  font: 13px/16px "Liberation Sans", Arial, sans-serif;
}
.ca { width: 119px; }
.cb { width: 233px; }
.cc { width: 120px; }
.cd { width: 229px; }
.schedule th, .schedule td { padding: 0; font-weight: 400; border-right: 1px solid #000; background: #fdfdfd; }
.schedule th:first-child, .schedule td:first-child { border-left: 1px solid #000; }
.schedule .title th { height: 50px; border: 1px solid #000; font-size: 20px; }
.schedule .letters th { height: 22px; padding-top: 2px; font-weight: 700; border-bottom: 2px solid #000; }
.schedule .letters th:first-child { border-left: 0; }
.schedule .names th { height: 19px; padding-top: 1px; border-bottom: 1px solid #000; }
.schedule .names th:not(:last-child), .schedule .data td:not(:last-child) { border-right: 1px dotted #333; }
.schedule .blank td { height: 19px; border-right: 0; background: #d0d0d0; }
.schedule .data td { height: 21px; padding: 0 0 2px 2px; border-top: 1px solid #000; border-bottom: 1px solid #000; white-space: nowrap; overflow: hidden; }
.pointer { position: absolute; left: 153px; top: 180px; }
```
